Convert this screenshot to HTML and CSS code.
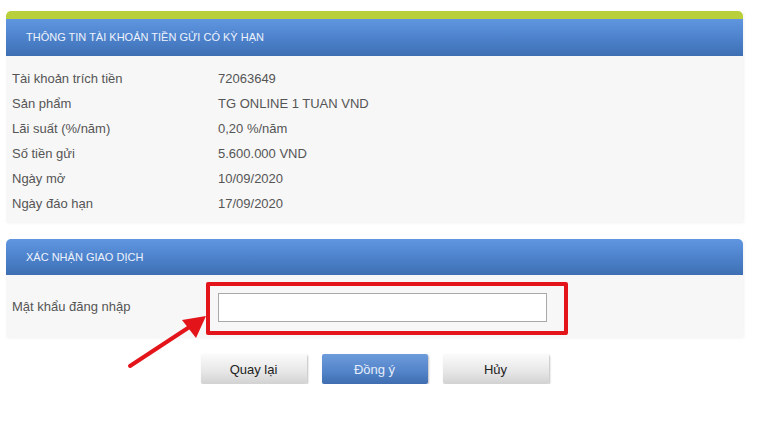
FILE: index.html
```html
<!DOCTYPE html>
<html lang="vi">
<head>
    <meta charset="UTF-8">
    <meta name="viewport" content="width=device-width, initial-scale=1.0">
    <title>Xác nhận giao dịch</title>

    <link rel="stylesheet" href="styles.css">
</head>
<body>

    <div class="page">
        <div class="panel first">
            <div class="panel-head">THÔNG TIN TÀI KHOẢN TIỀN GỬI CÓ KỲ HẠN</div>
            <div class="panel-body info">
                <div class="row"><span class="label">Tài khoản trích tiền</span><span>72063649</span></div>
                <div class="row"><span class="label">Sản phẩm</span><span>TG ONLINE 1 TUAN VND</span></div>
                <div class="row"><span class="label">Lãi suất (%/năm)</span><span>0,20 %/năm</span></div>
                <div class="row"><span class="label">Số tiền gửi</span><span>5.600.000 VND</span></div>
                <div class="row"><span class="label">Ngày mở</span><span>10/09/2020</span></div>
                <div class="row"><span class="label">Ngày đáo hạn</span><span>17/09/2020</span></div>
            </div>
        </div>

        <div class="panel">
            <div class="panel-head">XÁC NHẬN GIAO DỊCH</div>
            <div class="panel-body confirm">
                <span class="label">Mật khẩu đăng nhập</span>
                <div class="highlight">
                    <input type="password" class="pass">
                </div>
            </div>
        </div>

        <div class="buttons">
            <button class="btn">Quay lại</button>
            <button class="btn primary">Đồng ý</button>
            <button class="btn">Hủy</button>
        </div>

        <!-- annotation arrow pointing at the password box -->
        <svg class="arrow" width="100" height="70" viewBox="0 0 100 70">
            <line x1="4" y1="62" x2="68" y2="20" stroke="#e3141a" stroke-width="4" stroke-linecap="round"/>
            <polygon points="80,12 56,16 70,34" fill="#e3141a"/>
        </svg>
    </div>

</body>
</html>
```

FILE: styles.css
```css
body{
    margin: 0;
    background-color: #fff;
    font-family: "Liberation Sans", Arial, sans-serif;
    font-size: 13px;
    color: #555;
}

.page{
    position: relative;
    width: 737px;
    margin-left: 6px;
    padding-top: 11px;
}

.panel{
    box-shadow: 1px 1px 3px rgba(0, 0, 0, 0.06);
    margin-bottom: 17px;
}

.panel-head{
    height: 36px;
    line-height: 36px;
    padding-left: 20px;
    font-size: 11px;
    color: #eef3fc;
    background: linear-gradient(#6096e0, #4a7fc8 60%, #3e6fb2);
    border-radius: 5px 5px 0 0;
}

.first .panel-head{
    height: 37px;
    line-height: 37px;
    border-top: 8px solid #b9d03c;
}

.panel-body{
    background-color: #f7f7f7;
}

.info{
    padding: 10px 6px 6px 6px;
}

.row{
    display: flex;
    height: 25px;
    line-height: 25px;
}

.label{
    width: 206px;
    flex-shrink: 0;
}

.confirm{
    display: flex;
    align-items: center;
    padding: 7px 6px 2px 6px;
}

.confirm .label{
    width: 194px;
    margin-top: -5px;
}

.highlight{
    border: 4px solid #e3141a;
    border-radius: 2px;
    padding: 7px 17px 9px 8px;
}

.pass{
    display: block;
    width: 329px;
    height: 29px;
    box-sizing: border-box;
    border: 1px solid #a9a9a9;
    background-color: #fff;
    margin: 0;
}

.buttons{
    display: flex;
    justify-content: center;
    gap: 15px;
}

.btn{
    width: 106px;
    height: 30px;
    border: none;
    border-radius: 2px;
    font-family: "Liberation Sans", Arial, sans-serif;
    font-size: 13px;
    color: #222;
    background: linear-gradient(#fbfbfb, #e6e6e6 60%, #d2d2d2);
    box-shadow: 1px 1px 2px rgba(0, 0, 0, 0.25);
}

.btn.primary{
    color: #e6edfa;
    background: linear-gradient(#6d9cdc, #5283c8 60%, #3f6db0);
}

.arrow{
    position: absolute;
    left: 120px;
    top: 304px;
}
```
